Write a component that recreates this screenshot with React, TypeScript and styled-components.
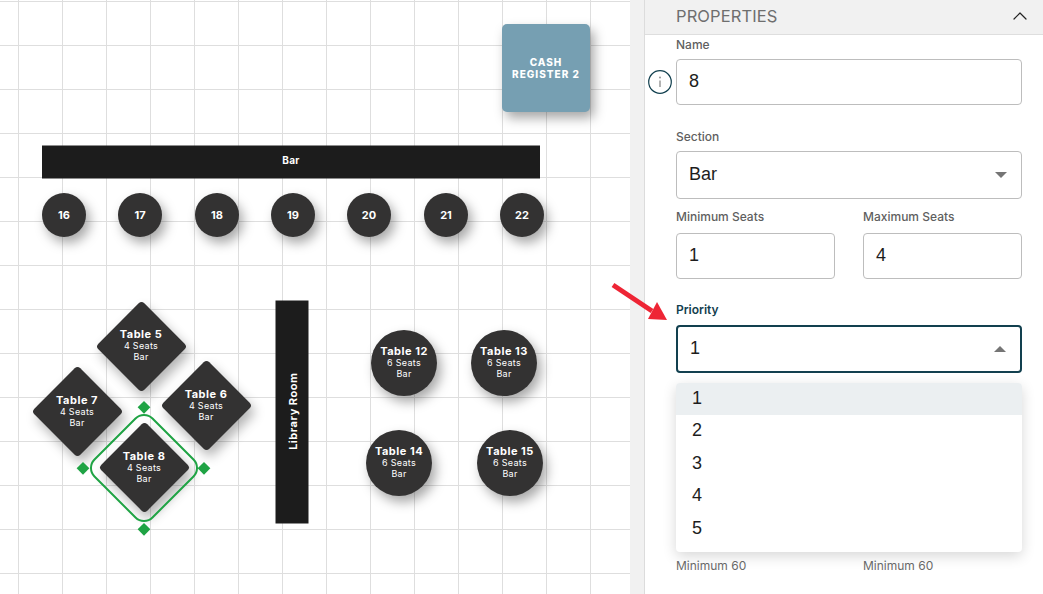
import styled, { createGlobalStyle, css } from 'styled-components';
import { ChevronUp } from 'lucide-react';

const GlobalStyle = createGlobalStyle`
    html, body {
        margin: 0;
        padding: 0;
        background: #fff;
        overflow: hidden;
    }
    * {
        box-sizing: border-box;
    }
`;

const nodeFont = `Inter, "Liberation Sans", sans-serif`;
const teal = '#12404f';

const Page = styled.div`
    display: flex;
    width: 1043px;
    height: 594px;
    position: relative;
    overflow: hidden;
`;

const Canvas = styled.div`
    position: relative;
    flex: 0 0 630px;
    height: 594px;
    background-color: #fff;
    background-image:
        linear-gradient(to right, #dedede 1px, transparent 1px),
        linear-gradient(to bottom, #dedede 1px, transparent 1px);
    background-size: 44px 44px;
    background-position: 18px 1px;
`;

const Gutter = styled.div`
    flex: 0 0 14px;
    background: #f1f1f1;
`;

const Node = styled.div<{ $x: number; $y: number }>`
    position: absolute;
    left: ${p => p.$x}px;
    top: ${p => p.$y}px;
    transform: translate(-50%, -50%);
    display: flex;
    flex-direction: column;
    align-items: center;
    justify-content: center;
    color: #fff;
    font-family: ${nodeFont};
    text-align: center;
`;

const Seat = styled(Node)`
    width: 44px;
    height: 44px;
    border-radius: 50%;
    background: #333232;
    box-shadow: 4px 6px 12px rgba(0, 0, 0, 0.35);
    font-size: 11px;
    font-weight: 700;
`;

const RoundTable = styled(Node)`
    width: 66px;
    height: 66px;
    padding-bottom: 2px;
    border-radius: 50%;
    background: #333232;
    box-shadow: 4px 6px 12px rgba(0, 0, 0, 0.35);
`;

const DiamondTable = styled(Node)`
    width: 90px;
    height: 90px;
    padding-bottom: 2px;

    &::before {
        content: '';
        position: absolute;
        left: 12.5px;
        top: 12.5px;
        width: 65px;
        height: 65px;
        border-radius: 4px;
        background: #333232;
        transform: rotate(45deg);
        box-shadow: 7px 2px 12px rgba(0, 0, 0, 0.3);
    }
`;

const TableName = styled.span`
    position: relative;
    font-size: 11px;
    font-weight: 700;
    line-height: 12px;
    letter-spacing: 0.5px;
`;

const TableInfo = styled.span`
    position: relative;
    font-size: 9px;
    font-weight: 400;
    line-height: 11px;
    letter-spacing: 0.3px;
`;

const Selection = styled(Node)`
    width: 84px;
    height: 84px;
    border: 2px solid #1fa344;
    border-radius: 13px;
    transform: translate(-50%, -50%) rotate(45deg);
`;

const Handle = styled(Node)`
    width: 8.5px;
    height: 8.5px;
    background: #1fa344;
    transform: translate(-50%, -50%) rotate(45deg);
`;

const Wall = styled(Node)<{ $w: number; $h: number }>`
    width: ${p => p.$w}px;
    height: ${p => p.$h}px;
    background: #1c1c1c;
    font-size: 10px;
    font-weight: 700;
    letter-spacing: 0.3px;
`;

const BarWall = styled(Wall)`
    padding-bottom: 4px;
`;

const WallLabel = styled.span<{ $vertical?: boolean }>`
    ${p => p.$vertical && css`
        writing-mode: vertical-rl;
        transform: rotate(180deg);
        font-size: 11px;
        letter-spacing: 0.5px;
    `}
`;

const Register = styled(Node)`
    width: 88px;
    height: 88px;
    border-radius: 5px;
    background: #769fb2;
    box-shadow: 4px 6px 12px rgba(0, 0, 0, 0.35);
    font-size: 10px;
    font-weight: 800;
    line-height: 12px;
    letter-spacing: 1px;
`;

const Panel = styled.aside`
    flex: 1;
    height: 594px;
    border-left: 1px solid #dcdcdc;
    background: #fff;
    font-family: Inter, "Liberation Sans", sans-serif;
`;

const PanelHeader = styled.header`
    display: flex;
    align-items: center;
    justify-content: space-between;
    height: 35px;
    padding: 0 11px 3px 31px;
    background: #f1f1f1;
    border-bottom: 1px solid #dedede;
    color: #6e6e6e;
    font-size: 16.5px;
    letter-spacing: 0.1px;
`;

const Form = styled.div`
    padding: 2px 21px 0 31px;
`;

const Field = styled.div<{ $top?: number }>`
    position: relative;
    flex: 1;
    margin-top: ${p => p.$top ?? 0}px;
`;

const Label = styled.div<{ $active?: boolean; $gap?: number }>`
    height: 16px;
    margin-bottom: ${p => p.$gap ?? 6}px;
    color: ${p => (p.$active ? teal : '#5f5f5f')};
    font-size: 12px;
    font-weight: ${p => (p.$active ? 600 : 500)};
    line-height: 16px;
`;

const InputRow = styled.div`
    display: flex;
    align-items: center;
    gap: 2px;
    margin-left: -30px;
`;

const InfoGlyph = styled.svg`
    flex: 0 0 28px;
`;

const Box = styled.div<{ $tall?: boolean; $focused?: boolean }>`
    display: flex;
    align-items: center;
    justify-content: space-between;
    flex: 1;
    height: ${p => (p.$tall ? 48 : 46)}px;
    padding: 0 14px 1px 12px;
    border: ${p => (p.$focused ? `2px solid ${teal}` : '1px solid #bdbdbd')};
    border-radius: 4px;
    color: #1d1d1d;
    font-family: "Liberation Sans", Arial, sans-serif;
    font-size: 18px;
`;

const Caret = styled.span<{ $up?: boolean }>`
    width: 0;
    height: 0;
    border-left: 6px solid transparent;
    border-right: 6px solid transparent;
    ${p => (p.$up ? 'border-bottom: 6px solid #757575;' : 'border-top: 6px solid #757575;')}
`;

const TwoColumns = styled.div`
    display: flex;
    gap: 28px;
`;

const Dropdown = styled.ul`
    position: absolute;
    z-index: 2;
    left: 0;
    right: 0;
    top: 81px;
    margin: 0;
    padding: 0 0 7px;
    list-style: none;
    background: #fff;
    border-radius: 4px;
    box-shadow: 0 4px 14px rgba(0, 0, 0, 0.16);
    font-family: "Liberation Sans", Arial, sans-serif;
    font-size: 18px;
    color: #1d1d1d;
    overflow: hidden;
`;

const Option = styled.li<{ $selected?: boolean }>`
    height: 32.4px;
    padding-left: 16px;
    line-height: 30px;
    background: ${p => (p.$selected ? '#ebeff1' : 'transparent')};
`;

const Hint = styled.div`
    flex: 1;
    height: 16px;
    color: #6b6b6b;
    font-size: 12px;
    line-height: 16px;
`;

const HintRow = styled(TwoColumns)`
    margin-top: 185px;
`;

const Callout = styled.svg`
    position: absolute;
    left: 605px;
    top: 278px;
    z-index: 3;
`;

const seats = [
    { n: 16, x: 64 },
    { n: 17, x: 140 },
    { n: 18, x: 217 },
    { n: 19, x: 293 },
    { n: 20, x: 369 },
    { n: 21, x: 446 },
    { n: 22, x: 522 },
];

const roundTables = [
    { n: 12, x: 404, y: 363 },
    { n: 13, x: 504, y: 363 },
    { n: 14, x: 399, y: 462.5 },
    { n: 15, x: 510, y: 462.5 },
];

const diamondTables = [
    { n: 5, x: 141, y: 346 },
    { n: 7, x: 77, y: 411.5 },
    { n: 6, x: 206, y: 405.5 },
    { n: 8, x: 144, y: 467.5 },
];

const handles = [
    { x: 144, y: 407 },
    { x: 144, y: 529 },
    { x: 83, y: 468 },
    { x: 204, y: 468 },
];

export default function App() {
    return (
        <Page>
            <GlobalStyle />
            <Canvas>
                <Register $x={546} $y={68}>
                    <span>CASH</span>
                    <span>REGISTER 2</span>
                </Register>
                <BarWall $x={291} $y={161.5} $w={498} $h={33}>
                    <WallLabel>Bar</WallLabel>
                </BarWall>
                <Wall $x={292} $y={411.5} $w={33} $h={223}>
                    <WallLabel $vertical>Library Room</WallLabel>
                </Wall>
                {seats.map(s => (
                    <Seat key={s.n} $x={s.x} $y={215}>{s.n}</Seat>
                ))}
                {diamondTables.map(t => (
                    <DiamondTable key={t.n} $x={t.x} $y={t.y}>
                        <TableName>Table {t.n}</TableName>
                        <TableInfo>4 Seats</TableInfo>
                        <TableInfo>Bar</TableInfo>
                    </DiamondTable>
                ))}
                {roundTables.map(t => (
                    <RoundTable key={t.n} $x={t.x} $y={t.y}>
                        <TableName>Table {t.n}</TableName>
                        <TableInfo>6 Seats</TableInfo>
                        <TableInfo>Bar</TableInfo>
                    </RoundTable>
                ))}
                <Selection $x={144} $y={467.5} />
                {handles.map(h => (
                    <Handle key={`${h.x}-${h.y}`} $x={h.x} $y={h.y} />
                ))}
            </Canvas>
            <Gutter />
            <Panel>
                <PanelHeader>
                    PROPERTIES
                    <ChevronUp size={24} strokeWidth={1.2} color="#222" />
                </PanelHeader>
                <Form>
                    <Field>
                        <Label>Name</Label>
                        <InputRow>
                            <InfoGlyph width="28" height="28" viewBox="0 0 28 28">
                                <circle cx="14" cy="14" r="11.3" fill="none" stroke={teal} strokeWidth="1.2" />
                                <path d="M14 12.5 V19" stroke="#8a8a8a" strokeWidth="1.3" />
                                <circle cx="14" cy="9.5" r="0.9" fill="#8a8a8a" />
                            </InfoGlyph>
                            <Box>8</Box>
                        </InputRow>
                    </Field>
                    <Field $top={24}>
                        <Label>Section</Label>
                        <Box $tall>
                            Bar
                            <Caret />
                        </Box>
                    </Field>
                    <TwoColumns>
                        <Field $top={10}>
                            <Label $gap={8}>Minimum Seats</Label>
                            <Box>1</Box>
                        </Field>
                        <Field $top={10}>
                            <Label $gap={8}>Maximum Seats</Label>
                            <Box>4</Box>
                        </Field>
                    </TwoColumns>
                    <Field $top={23}>
                        <Label $active $gap={7}>Priority</Label>
                        <Box $tall $focused>
                            1
                            <Caret $up />
                        </Box>
                        <Dropdown>
                            <Option $selected>1</Option>
                            <Option>2</Option>
                            <Option>3</Option>
                            <Option>4</Option>
                            <Option>5</Option>
                        </Dropdown>
                    </Field>
                    <HintRow>
                        <Hint>Minimum 60</Hint>
                        <Hint>Minimum 60</Hint>
                    </HintRow>
                </Form>
            </Panel>
            <Callout width="70" height="50" viewBox="0 0 70 50">
                <path d="M8 7 L47 33" stroke="#ee2535" strokeWidth="5" fill="none" />
                <path d="M62 42 L43 41 L52 24 Z" fill="#ee2535" />
            </Callout>
        </Page>
    );
}
